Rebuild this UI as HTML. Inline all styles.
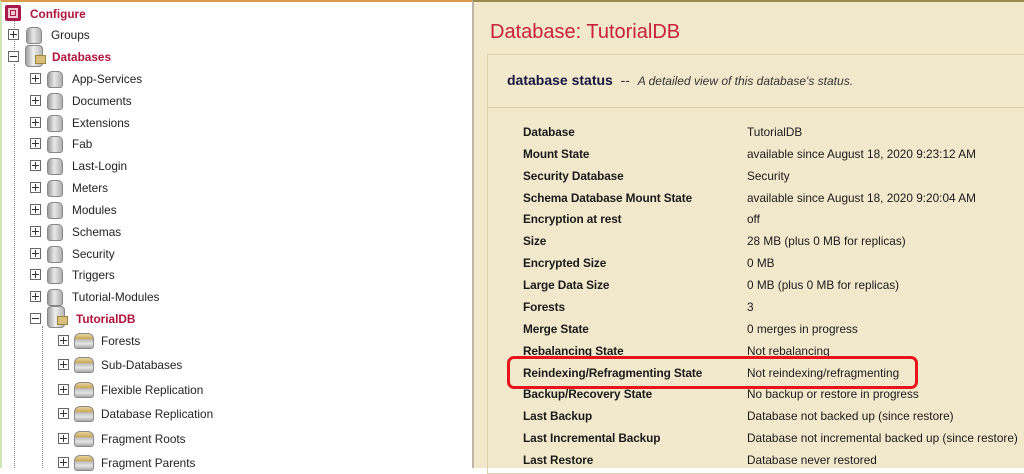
<!DOCTYPE html>
<html><head><meta charset="utf-8"><style>
*{margin:0;padding:0;box-sizing:border-box}
body{width:1024px;height:468px;overflow:hidden;position:relative;background:#fff;font-family:"Liberation Sans",Arial,sans-serif;}
#left{position:absolute;left:0;top:0;width:472px;height:468px;background:#fff;border-left:2px solid #cfe6b8;border-top:2px solid #d99a4a}
#right{position:absolute;left:472px;top:0;width:552px;height:468px;background:#f2e9cd;border-left:2px solid #bdb6a6;border-top:2px solid #9a8a50}
.t{position:absolute;font-size:11.8px;color:#222;white-space:nowrap;line-height:14px}
.red{color:#b0143c;font-weight:bold}
.ex{position:absolute;width:11px;height:11px;border:1px solid #666;background:#fff}
.ex:before{content:"";position:absolute;left:1px;top:4px;width:7px;height:1px;background:#333}
.ex.p:after{content:"";position:absolute;left:4px;top:1px;width:1px;height:7px;background:#333}
.ic{position:absolute;width:16px;height:17px;border-radius:5px 5px 3px 3px;background:linear-gradient(90deg,#9a9a9a,#e8e8e8 45%,#b0b0b0);border:1px solid #888}
.ic2{position:absolute;width:20px;height:16px;border-radius:6px 6px 3px 3px;background:linear-gradient(180deg,#e8d59a 0,#c9a85a 35%,#bdbdbd 40%,#e4e4e4 70%,#a8a8a8);border:1px solid #8a8a8a}
.big{position:absolute;width:18px;height:22px;border-radius:4px;background:linear-gradient(90deg,#a0a0a0,#eee 45%,#b8b8b8);border:1px solid #888}
.big:after{content:"";position:absolute;right:-4px;bottom:2px;width:9px;height:7px;background:#d9c07a;border:1px solid #9a8440}
.vl{position:absolute;width:0;border-left:1px dotted #888}
.lab{position:absolute;left:523px;font-size:11.8px;font-weight:bold;color:#1a1a1a;white-space:nowrap;letter-spacing:-0.1px}
.val{position:absolute;left:747px;font-size:11.8px;color:#1a1a1a;white-space:nowrap}
</style></head><body>
<div id="left"></div>
<div id="right"></div>

<div class="vl" style="left:14px;top:20px;height:30px"></div>
<div class="vl" style="left:14px;top:64px;height:404px"></div>
<div class="vl" style="left:42px;top:326px;height:142px"></div>

<div style="position:absolute;left:5px;top:5px;width:16px;height:16px;background:#a81a4c;border-radius:2px"></div>
<div style="position:absolute;left:8px;top:8px;width:10px;height:10px;border:2px solid #f2c9d5"></div>
<div style="position:absolute;left:11px;top:11px;width:4px;height:4px;background:#f2c9d5"></div>
<div class="t red" style="left:30px;top:7px">Configure</div>

<div class="ex p" style="left:8px;top:29px"></div>
<div class="ic" style="left:26px;top:27px"></div>
<div class="t" style="left:51px;top:28px">Groups</div>
<div class="ex" style="left:8px;top:51px"></div>
<div class="big" style="left:25px;top:45px"></div>
<div class="t red" style="left:52px;top:50px">Databases</div>

<div class="ex p" style="left:30px;top:73px"></div><div class="ic" style="left:47px;top:71px"></div><div class="t" style="left:72px;top:72px">App-Services</div>
<div class="ex p" style="left:30px;top:95px"></div><div class="ic" style="left:47px;top:93px"></div><div class="t" style="left:72px;top:94px">Documents</div>
<div class="ex p" style="left:30px;top:117px"></div><div class="ic" style="left:47px;top:115px"></div><div class="t" style="left:72px;top:116px">Extensions</div>
<div class="ex p" style="left:30px;top:138px"></div><div class="ic" style="left:47px;top:136px"></div><div class="t" style="left:72px;top:137px">Fab</div>
<div class="ex p" style="left:30px;top:160px"></div><div class="ic" style="left:47px;top:158px"></div><div class="t" style="left:72px;top:159px">Last-Login</div>
<div class="ex p" style="left:30px;top:182px"></div><div class="ic" style="left:47px;top:180px"></div><div class="t" style="left:72px;top:181px">Meters</div>
<div class="ex p" style="left:30px;top:204px"></div><div class="ic" style="left:47px;top:202px"></div><div class="t" style="left:72px;top:203px">Modules</div>
<div class="ex p" style="left:30px;top:226px"></div><div class="ic" style="left:47px;top:224px"></div><div class="t" style="left:72px;top:225px">Schemas</div>
<div class="ex p" style="left:30px;top:248px"></div><div class="ic" style="left:47px;top:246px"></div><div class="t" style="left:72px;top:247px">Security</div>
<div class="ex p" style="left:30px;top:269px"></div><div class="ic" style="left:47px;top:267px"></div><div class="t" style="left:72px;top:268px">Triggers</div>
<div class="ex p" style="left:30px;top:291px"></div><div class="ic" style="left:47px;top:289px"></div><div class="t" style="left:72px;top:290px">Tutorial-Modules</div>
<div class="ex" style="left:30px;top:313px"></div><div class="big" style="left:47px;top:306px"></div><div class="t red" style="left:76px;top:312px">TutorialDB</div>

<div class="ex p" style="left:58px;top:335px"></div><div class="ic2" style="left:74px;top:333px"></div><div class="t" style="left:101px;top:334px">Forests</div>
<div class="ex p" style="left:58px;top:359px"></div><div class="ic2" style="left:74px;top:357px"></div><div class="t" style="left:101px;top:358px">Sub-Databases</div>
<div class="ex p" style="left:58px;top:384px"></div><div class="ic2" style="left:74px;top:382px"></div><div class="t" style="left:101px;top:383px">Flexible Replication</div>
<div class="ex p" style="left:58px;top:408px"></div><div class="ic2" style="left:74px;top:406px"></div><div class="t" style="left:101px;top:407px">Database Replication</div>
<div class="ex p" style="left:58px;top:433px"></div><div class="ic2" style="left:74px;top:431px"></div><div class="t" style="left:101px;top:432px">Fragment Roots</div>
<div class="ex p" style="left:58px;top:457px"></div><div class="ic2" style="left:74px;top:455px"></div><div class="t" style="left:101px;top:456px">Fragment Parents</div>

<div style="position:absolute;left:490px;top:21px;font-size:20px;color:#c8203c;white-space:nowrap">Database: TutorialDB</div>
<div style="position:absolute;left:487px;top:54px;width:560px;height:420px;border:1px solid #dcd0a6"></div>
<div style="position:absolute;left:487px;top:107px;width:560px;height:0;border-top:1px solid #dcd0a6"></div>
<div style="position:absolute;left:507px;top:72px;font-size:14px;white-space:nowrap;color:#333"><b style="color:#15153f">database status</b>&nbsp; -- &nbsp;<i style="font-size:12px">A detailed view of this database's status.</i></div>

<div class="lab" style="top:125px">Database</div><div class="val" style="top:125px">TutorialDB</div>
<div class="lab" style="top:147px">Mount State</div><div class="val" style="top:147px">available since August 18, 2020 9:23:12 AM</div>
<div class="lab" style="top:169px">Security Database</div><div class="val" style="top:169px">Security</div>
<div class="lab" style="top:191px">Schema Database Mount State</div><div class="val" style="top:191px">available since August 18, 2020 9:20:04 AM</div>
<div class="lab" style="top:212px">Encryption at rest</div><div class="val" style="top:212px">off</div>
<div class="lab" style="top:234px">Size</div><div class="val" style="top:234px">28 MB (plus 0 MB for replicas)</div>
<div class="lab" style="top:256px">Encrypted Size</div><div class="val" style="top:256px">0 MB</div>
<div class="lab" style="top:278px">Large Data Size</div><div class="val" style="top:278px">0 MB (plus 0 MB for replicas)</div>
<div class="lab" style="top:300px">Forests</div><div class="val" style="top:300px">3</div>
<div class="lab" style="top:322px">Merge State</div><div class="val" style="top:322px">0 merges in progress</div>
<div class="lab" style="top:344px">Rebalancing State</div><div class="val" style="top:344px">Not rebalancing</div>
<div class="lab" style="top:366px">Reindexing/Refragmenting State</div><div class="val" style="top:366px">Not reindexing/refragmenting</div>
<div class="lab" style="top:387px">Backup/Recovery State</div><div class="val" style="top:387px">No backup or restore in progress</div>
<div class="lab" style="top:409px">Last Backup</div><div class="val" style="top:409px">Database not backed up (since restore)</div>
<div class="lab" style="top:431px">Last Incremental Backup</div><div class="val" style="top:431px">Database not incremental backed up (since restore)</div>
<div class="lab" style="top:453px">Last Restore</div><div class="val" style="top:453px">Database never restored</div>

<div style="position:absolute;left:507px;top:356px;width:411px;height:33px;border:3px solid #e8141c;border-radius:7px"></div>
</body></html>
